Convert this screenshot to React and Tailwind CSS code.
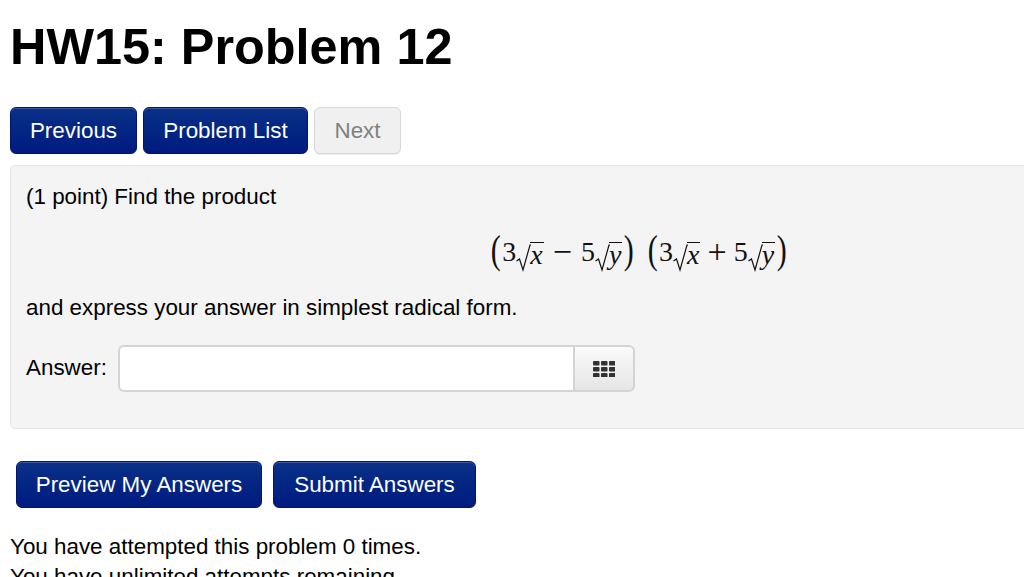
import React from "react";

const btn = "h-[47px] rounded-[6px] border border-[#00156b] bg-gradient-to-b from-[#0a3087] to-[#001a80] text-white text-[22.4px] shadow-[inset_0_1px_0_rgba(255,255,255,0.2)] flex items-center justify-center";

function Root({ v }) {
  return (
    <span className="inline-flex items-end">
      <svg width="15" height="28" viewBox="0 0 15 28" className="-mr-px translate-y-[6px]">
        <path d="M0.5 17 L3.5 15 L7 26 L14 1 L15 1" fill="none" stroke="#111" strokeWidth="1.2" />
      </svg>
      <span className="border-t border-[#111] leading-[23px] italic pr-[1px]">{v}</span>
    </span>
  );
}

const Paren = ({ c }) => <span className="text-[40px] font-light leading-[30px] scale-x-75 -translate-y-[2px]">{c}</span>;

export default function App() {
  return (
    <div className="w-[1024px] h-[577px] overflow-hidden bg-white text-black font-['Liberation_Sans',Arial,sans-serif] text-[22.4px] leading-[30px] pl-[10px]">
      <h1 className="font-bold text-[50.4px] leading-[56px] pt-[19px]">HW15: Problem 12</h1>
      <div className="flex gap-[6px] mt-[32px]">
        <div className={`${btn} w-[127px]`}>Previous</div>
        <div className={`${btn} w-[165px]`}>Problem List</div>
        <div className="h-[47px] w-[87px] rounded-[6px] border border-[#d8d8d8] bg-[#f0f0f0] text-[#808080] flex items-center justify-center shadow-[0_1px_1px_rgba(0,0,0,0.08)]">Next</div>
      </div>
      <div className="mt-[11px] h-[264px] w-[1100px] rounded-l-[5px] border border-[#e6e6e6] bg-[#f4f4f4] pl-[15px] pt-[16px]">
        <p>(1 point) Find the product</p>
        <div className="mt-[21px] h-[38px] pl-[463px] flex items-center gap-[10px] font-['Liberation_Serif','Times_New_Roman',serif] text-[28px] text-[#111] whitespace-nowrap">
          <span className="flex items-center">
            <Paren c="(" />
            <span>3</span><Root v="x" />
            <span className="mx-[9px] text-[34px] leading-[30px]">−</span>
            <span>5</span><Root v="y" />
            <Paren c=")" />
          </span>
          <span className="flex items-center">
            <Paren c="(" />
            <span>3</span><Root v="x" />
            <span className="mx-[7px] text-[34px] leading-[30px]">+</span>
            <span>5</span><Root v="y" />
            <Paren c=")" />
          </span>
        </div>
        <p className="mt-[22px]">and express your answer in simplest radical form.</p>
        <div className="flex items-center mt-[22px]">
          <span className="w-[79px] whitespace-nowrap -translate-y-px">Answer:</span>
          <div className="ml-[13px] w-[455px] h-[47px] bg-white border-2 border-r-0 border-[#d4d4d4] rounded-l-[6px]" />
          <div className="w-[62px] h-[47px] flex items-center justify-center rounded-r-[6px] border-2 border-[#d4d4d4] bg-gradient-to-b from-[#fafafa] to-[#e6e6e6]">
            <svg width="22" height="16" viewBox="0 0 22 16" fill="#333">
              {[0, 6, 12].map((y) =>
                [0, 8, 16].map((x) => <rect key={`${x}-${y}`} x={x} y={y} width="6.5" height="4.5" rx="1" />)
              )}
            </svg>
          </div>
        </div>
      </div>
      <div className="flex gap-[11px] mt-[32px] ml-[6px]">
        <div className={`${btn} w-[246px]`}>Preview My Answers</div>
        <div className={`${btn} w-[203px]`}>Submit Answers</div>
      </div>
      <p className="mt-[24px]">You have attempted this problem 0 times.</p>
      <p>You have unlimited attempts remaining.</p>
    </div>
  );
}
